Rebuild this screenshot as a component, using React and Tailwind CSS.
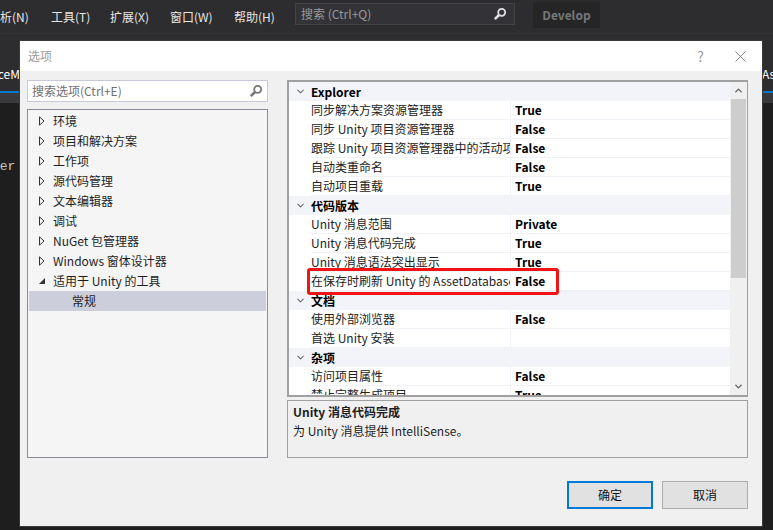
import { ChevronDown, ChevronUp } from "lucide-react";

const tree = [
  "环境",
  "项目和解决方案",
  "工作项",
  "源代码管理",
  "文本编辑器",
  "调试",
  "NuGet 包管理器",
  "Windows 窗体设计器",
];

const groups = [
  {
    title: "Explorer",
    rows: [
      ["同步解决方案资源管理器", "True"],
      ["同步 Unity 项目资源管理器", "False"],
      ["跟踪 Unity 项目资源管理器中的活动项", "False"],
      ["自动类重命名", "False"],
      ["自动项目重载", "True"],
    ],
  },
  {
    title: "代码版本",
    rows: [
      ["Unity 消息范围", "Private"],
      ["Unity 消息代码完成", "True"],
      ["Unity 消息语法突出显示", "True"],
      ["在保存时刷新 Unity 的 AssetDatabase", "False"],
    ],
  },
  {
    title: "文档",
    rows: [
      ["使用外部浏览器", "False"],
      ["首选 Unity 安装", ""],
    ],
  },
  {
    title: "杂项",
    rows: [
      ["访问项目属性", "False"],
      ["禁止完整生成项目", "True"],
    ],
  },
];

function SearchIcon({ className }) {
  return (
    <svg viewBox="0 0 14 14" className={className} fill="none" stroke="currentColor">
      <circle cx="8.7" cy="5.3" r="3.5" strokeWidth="1.8" />
      <path d="M6 8 L1.8 12.2" strokeWidth="2.6" />
    </svg>
  );
}

function Arrow() {
  return (
    <svg viewBox="0 0 6 10" className="w-[6px] h-[10px] text-[#333]" fill="none" stroke="currentColor">
      <path d="M0.5 0.8 L5 5 L0.5 9.2 Z" />
    </svg>
  );
}

function OpenArrow() {
  return (
    <svg viewBox="0 0 6 6" className="w-[6px] h-[6px] text-[#333]" fill="currentColor">
      <path d="M6 0 V6 H0 Z" />
    </svg>
  );
}

function Group({ group }) {
  return (
    <div>
      <div className="h-[19px] flex items-center bg-[#f3f4fa] font-bold text-black">
        <div className="w-[22px] flex justify-center pl-px">
          <ChevronDown size={11} strokeWidth={2.2} className="text-[#666]" />
        </div>
        <span>{group.title}</span>
      </div>
      {group.rows.map(([name, value]) => (
        <div key={name} className="h-[19px] flex items-center ml-[22px] bg-white border-b border-[#f1f2f8]">
          <div className="w-[200px] shrink-0 overflow-hidden whitespace-nowrap text-[#222] border-r border-[#f1f2f8] leading-[18px]">
            {name}
          </div>
          <div className="pl-[4px] font-bold text-black">{value}</div>
        </div>
      ))}
    </div>
  );
}

function Dialog() {
  return (
    <div
      className="absolute left-[20px] top-[41px] w-[742px] h-[485px] flex flex-col bg-[#f0f0f0] text-[12px] shadow-[0_0_0_1px_#3a3a3d]"
    >
      {/* タイトルバー */}
      <div className="h-[30px] shrink-0 bg-white flex items-center pl-[8px] pr-[16px] text-[#9a9a9a]">
        <span className="flex-1">选项</span>
        <span className="text-[14px] mr-[31px] text-[#9a9a9a]">?</span>
        <svg viewBox="0 0 11 11" className="w-[11px] h-[11px] text-[#888]" fill="none" stroke="currentColor">
          <path d="M0.5 0.5 L10.5 10.5 M10.5 0.5 L0.5 10.5" />
        </svg>
      </div>

      <div className="flex-1 flex flex-col pt-[9px] pl-[7px] pr-[14px] pb-[17px]">
        <div className="flex gap-[19px] h-[378px]">
          {/* 左ペイン */}
          <div className="w-[241px] shrink-0 flex flex-col gap-[7px]">
            <div className="h-[22px] bg-white border border-[#c9c9de] flex items-center pl-[4px] pr-[4px] text-[#6f6f6f]">
              <span className="flex-1">搜索选项(Ctrl+E)</span>
              <SearchIcon className="w-[14px] h-[14px] text-[#777]" />
            </div>
            <div className="flex-1 bg-[#f5f5f5] border border-[#8b8b9b] pt-px px-px">
              {tree.map((item) => (
                <div key={item} className="h-[20px] flex items-center text-[#1e1e1e]">
                  <div className="w-[24px] pl-[10px] flex items-center">
                    <Arrow />
                  </div>
                  <span>{item}</span>
                </div>
              ))}
              <div className="h-[20px] flex items-center text-[#1e1e1e]">
                <div className="w-[24px] pl-[10px] flex items-center">
                  <OpenArrow />
                </div>
                <span>适用于 Unity 的工具</span>
              </div>
              <div className="h-[20px] flex items-center bg-[#cccedb] text-[#1e1e1e] pl-[43px]">常规</div>
            </div>
          </div>

          {/* 右ペイン */}
          <div className="flex-1 flex flex-col gap-[3px] min-w-0">
            <div className="h-[317px] shrink-0 relative flex bg-white border-2 border-[#a0a0a0] border-r-1 overflow-hidden">
              <div className="flex-1 min-w-0 overflow-hidden">
                {groups.map((group) => (
                  <Group key={group.title} group={group} />
                ))}
              </div>
              <div className="w-[17px] shrink-0 bg-[#f0f0f0] flex flex-col relative">
                <div className="h-[17px] flex items-center justify-center">
                  <ChevronUp size={11} strokeWidth={3} className="text-[#606060]" />
                </div>
                <div className="h-[179px] mx-px bg-[#cdcdcd]" />
                <div className="flex-1" />
                <div className="h-[17px] flex items-center justify-center">
                  <ChevronDown size={11} strokeWidth={3} className="text-[#606060]" />
                </div>
              </div>
            </div>
            <div className="flex-1 border border-[#a0a0a0] bg-[#f0f0f0] px-[5px] pt-px leading-[19px] text-[#1e1e1e]">
              <div className="font-bold">Unity 消息代码完成</div>
              <div>为 Unity 消息提供 IntelliSense。</div>
            </div>
          </div>
        </div>

        {/* ボタン */}
        <div className="mt-auto flex justify-end gap-[9px]">
          <button className="w-[86px] h-[28px] bg-[#e1e1e1] border-2 border-[#0078d7] text-[#111]">确定</button>
          <button className="w-[86px] h-[28px] bg-[#e1e1e1] border border-[#adadad] text-[#111]">取消</button>
        </div>
      </div>

      {/* 赤枠 */}
      <div className="absolute left-[287px] top-[227px] w-[252px] h-[27px] border-[3px] border-[#f01414] rounded-[3px]" />
    </div>
  );
}

export default function App() {
  return (
    <div
      className="relative w-[773px] h-[530px] overflow-hidden bg-[#1e1e1e] text-white"
      style={{ fontFamily: '"Noto Sans CJK SC", "Noto Sans", sans-serif' }}
    >
      {/* メニュー */}
      <div className="h-[33px] bg-[#2d2d30] flex items-center text-[12px] text-[#e6e6e6] relative">
        <span className="absolute left-[-12px]">分析(N)</span>
        <span className="absolute left-[51px]">工具(T)</span>
        <span className="absolute left-[110px]">扩展(X)</span>
        <span className="absolute left-[170px]">窗口(W)</span>
        <span className="absolute left-[234px]">帮助(H)</span>
        <div className="absolute left-[295px] top-[3px] w-[220px] h-[22px] border border-[#434346] bg-[#333337] flex items-center pl-[5px] pr-[7px] text-[#999]">
          <span className="flex-1">搜索 (Ctrl+Q)</span>
          <SearchIcon className="w-[14px] h-[14px] text-[#e0e0e0]" />
        </div>
        <div className="absolute left-[533px] top-[2px] w-[67px] h-[26px] bg-[#252526] flex items-center justify-center font-bold text-[#77777a]">
          Develop
        </div>
      </div>
      <div className="h-[22px] bg-[#2d2d30] border-t border-[#333337]" />
      {/* タブ */}
      <div className="h-[38px] bg-[#2d2d30] flex justify-between items-end text-[12px] text-white">
        <div className="w-[20px] overflow-hidden whitespace-nowrap border-b-[2px] border-[#007acc] h-[28px] flex justify-end">
          <span>ceM</span>
        </div>
        <div className="w-[11px] overflow-hidden whitespace-nowrap border-b-[2px] border-[#007acc] h-[28px]">As</div>
      </div>
      <div className="h-[10px] bg-[#3a3a3d]" />
      <div className="pt-[54px] font-mono text-[13px] text-[#c8c8c8] pl-[-4px] w-[20px] overflow-hidden whitespace-nowrap">
        <span className="block ml-[-8px]">ner</span>
      </div>
      <Dialog />
    </div>
  );
}
